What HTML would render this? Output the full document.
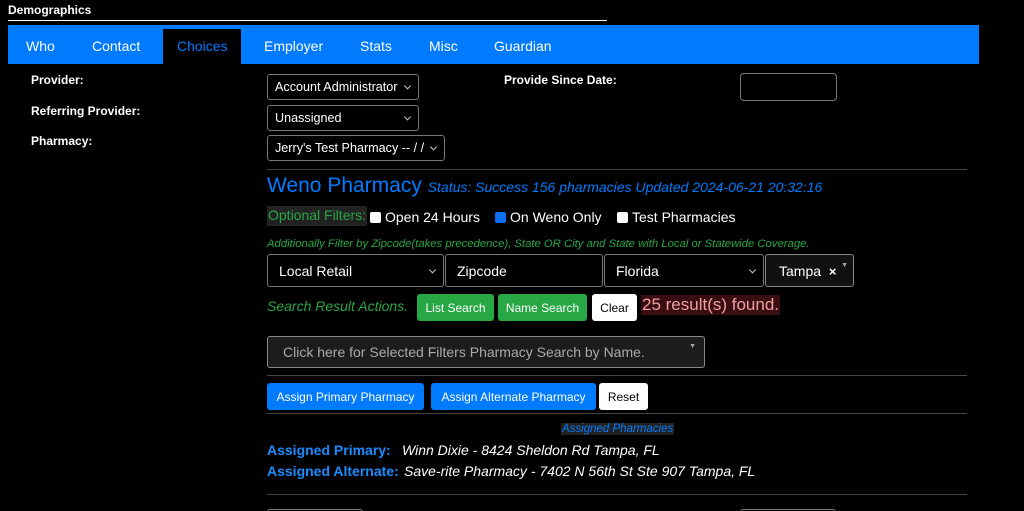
<!DOCTYPE html>
<html><head><style>
*{box-sizing:border-box;margin:0;padding:0}
html,body{width:1024px;height:511px;overflow:hidden}
body{background:#000;color:#fff;font-family:"Liberation Sans",sans-serif;position:relative}
.a{position:absolute;white-space:nowrap}
.lbl{font-size:12px;font-weight:bold}
.sel{position:absolute;border:1px solid #777;border-radius:3px;background:#000;color:#fff;font-size:13px;padding-left:7px;display:flex;align-items:center}
.sel:after{content:"";position:absolute;right:8px;top:50%;width:4px;height:4px;border-right:1px solid #ccc;border-bottom:1px solid #ccc;transform:translateY(-70%) rotate(45deg)}
.sel.n:after{display:none}
.hr{position:absolute;left:267px;width:700px;height:1px;background:#444}
.btn{position:absolute;border-radius:3px;font-size:12px;display:flex;align-items:center;justify-content:center}
.cb{display:inline-block;width:11px;height:11px;background:#fff;border-radius:2px;vertical-align:-1px;margin-right:4px}
</style></head><body>
<div class="a lbl" style="left:8px;top:3px;font-size:12px">Demographics</div>
<div class="a" style="left:8px;top:20px;width:599px;height:1px;background:#fff"></div>
<div class="a" style="left:8px;top:25px;width:971px;height:39px;background:#007bff"></div>
<div class="a" style="left:163px;top:29px;width:78px;height:35px;background:#000"></div>
<div class="a" style="left:26px;top:38px;font-size:14px">Who</div>
<div class="a" style="left:92px;top:38px;font-size:14px">Contact</div>
<div class="a" style="left:177px;top:38px;font-size:14px;color:#007bff">Choices</div>
<div class="a" style="left:264px;top:38px;font-size:14px">Employer</div>
<div class="a" style="left:360px;top:38px;font-size:14px">Stats</div>
<div class="a" style="left:429px;top:38px;font-size:14px">Misc</div>
<div class="a" style="left:494px;top:38px;font-size:14px">Guardian</div>
<div class="a lbl" style="left:31px;top:73px">Provider:</div>
<div class="a lbl" style="left:31px;top:104px">Referring Provider:</div>
<div class="a lbl" style="left:31px;top:134px">Pharmacy:</div>
<div class="a lbl" style="left:504px;top:73px">Provide Since Date:</div>
<div class="a" style="left:740px;top:73px;width:97px;height:28px;border:1px solid #777;border-radius:4px"></div>
<div class="sel" style="left:267px;top:74px;width:152px;height:26px;font-size:12.6px">Account Administrator</div>
<div class="sel" style="left:267px;top:105px;width:152px;height:26px;font-size:12.6px">Unassigned</div>
<div class="sel" style="left:267px;top:135px;width:178px;height:26px;font-size:12.6px">Jerry's Test Pharmacy -- / /</div>
<div class="hr" style="top:169px"></div>
<div class="a" style="left:267px;top:174px;font-size:21px;color:#007bff">Weno Pharmacy <span style="font-size:14px;font-style:italic">Status: Success 156 pharmacies Updated 2024-06-21 20:32:16</span></div>
<div class="a" style="left:267px;top:206px;height:20px;padding:1px 1px;background:#222;font-size:14px;color:#28a745">Optional Filters:</div>
<div class="a" style="left:370px;top:209px;font-size:14px"><span class="cb"></span>Open 24 Hours</div>
<div class="a" style="left:495px;top:209px;font-size:14px"><span class="cb" style="background:#0a6ff0"></span>On Weno Only</div>
<div class="a" style="left:617px;top:209px;font-size:14px"><span class="cb"></span>Test Pharmacies</div>
<div class="a" style="left:267px;top:238px;font-size:11.3px;font-style:italic;color:#28a745">Additionally Filter by Zipcode(takes precedence), State OR City and State with Local or Statewide Coverage.</div>
<div class="sel" style="left:267px;top:254px;width:177px;height:33px;font-size:14px;padding-left:11px">Local Retail</div>
<div class="sel n" style="left:445px;top:254px;width:158px;height:33px;font-size:14px;padding-left:11px">Zipcode</div>
<div class="sel" style="left:604px;top:254px;width:160px;height:33px;font-size:14px;padding-left:11px">Florida</div>
<div class="a" style="left:765px;top:254px;width:89px;height:33px;border:1px solid #888;border-radius:3px;background:#111;font-size:14px;padding:8px 0 0 13px">Tampa <span style="font-size:13px;font-weight:bold;margin-left:4px">×</span><span style="font-size:7px;color:#aaa;position:absolute;right:5px;top:7px">▼</span></div>
<div class="a" style="left:267px;top:298px;font-size:14px;font-style:italic;color:#28a745">Search Result Actions.</div>
<div class="btn" style="left:417px;top:294px;width:77px;height:27px;background:#28a745">List Search</div>
<div class="btn" style="left:498px;top:294px;width:89px;height:27px;background:#28a745">Name Search</div>
<div class="btn" style="left:592px;top:294px;width:45px;height:27px;background:#fff;color:#000">Clear</div>
<div class="a" style="left:641px;top:295px;font-size:17px;color:#f0a0a0;background:#3a0d12;padding:0 1px">25 result(s) found.</div>
<div class="a" style="left:267px;top:336px;width:438px;height:32px;border:1px solid #888;border-radius:3px;background:#1c1c1c;font-size:14px;color:#aaa;padding:7px 0 0 15px">Click here for Selected Filters Pharmacy Search by Name.<span style="font-size:7px;position:absolute;right:8px;top:6px">▼</span></div>
<div class="hr" style="top:375px"></div>
<div class="btn" style="left:267px;top:383px;width:157px;height:27px;background:#007bff">Assign Primary Pharmacy</div>
<div class="btn" style="left:431px;top:383px;width:165px;height:27px;background:#007bff">Assign Alternate Pharmacy</div>
<div class="btn" style="left:599px;top:383px;width:49px;height:27px;background:#fff;color:#000">Reset</div>
<div class="hr" style="top:413px"></div>
<div class="a" style="left:561px;top:423px;font-size:11.5px;font-style:italic;color:#007bff;background:#222;padding:0 1px">Assigned Pharmacies</div>
<div class="a" style="left:267px;top:442px;font-size:14px;font-weight:bold;color:#1a8cff">Assigned Primary:</div>
<div class="a" style="left:402px;top:442px;font-size:14px;font-style:italic">Winn Dixie - 8424 Sheldon Rd Tampa, FL</div>
<div class="a" style="left:267px;top:463px;font-size:14px;font-weight:bold;color:#1a8cff">Assigned Alternate:</div>
<div class="a" style="left:404px;top:463px;font-size:14px;font-style:italic">Save-rite Pharmacy - 7402 N 56th St Ste 907 Tampa, FL</div>
<div class="hr" style="top:494px"></div>
<div class="a" style="left:267px;top:509px;width:96px;height:10px;border:1px solid #777;border-radius:3px"></div>
<div class="a" style="left:740px;top:509px;width:96px;height:10px;border:1px solid #777;border-radius:3px"></div>
</body></html>
